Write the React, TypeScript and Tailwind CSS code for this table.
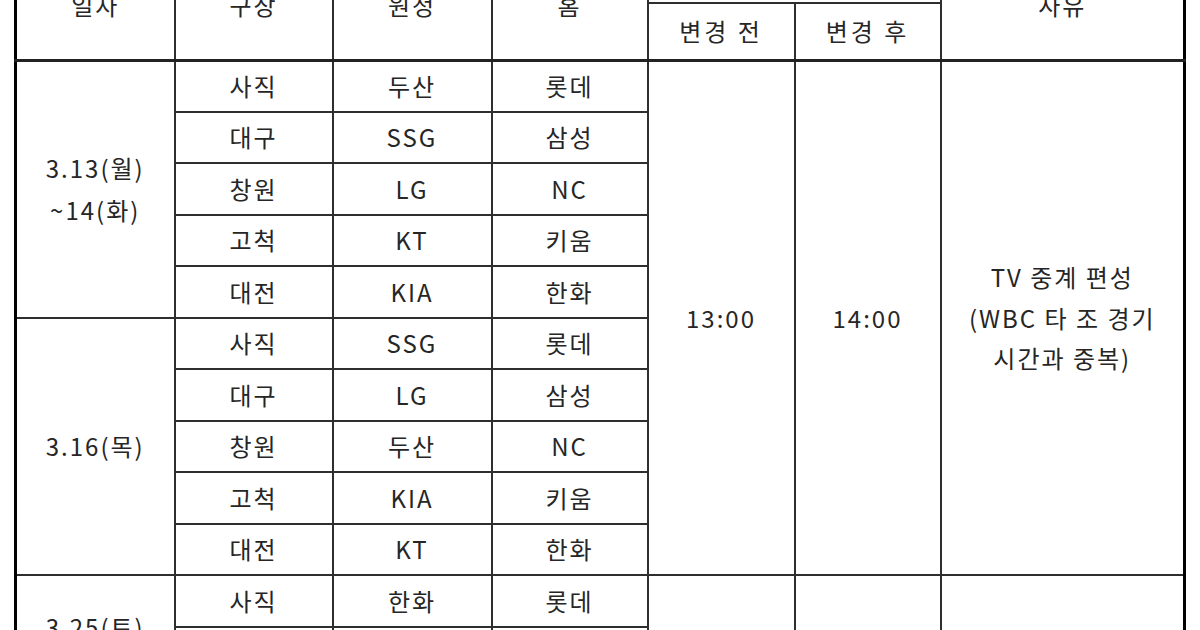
type Game = [string, string, string];

const groups: { date: string[]; games: Game[] }[] = [
  {
    date: ['3.13(월)', '~14(화)'],
    games: [
      ['사직', '두산', '롯데'],
      ['대구', 'SSG', '삼성'],
      ['창원', 'LG', 'NC'],
      ['고척', 'KT', '키움'],
      ['대전', 'KIA', '한화'],
    ],
  },
  {
    date: ['3.16(목)'],
    games: [
      ['사직', 'SSG', '롯데'],
      ['대구', 'LG', '삼성'],
      ['창원', '두산', 'NC'],
      ['고척', 'KIA', '키움'],
      ['대전', 'KT', '한화'],
    ],
  },
  {
    date: ['3.25(토)'],
    games: [
      ['사직', '한화', '롯데'],
      ['대구', 'KIA', '삼성'],
    ],
  },
];

const cell = 'border-2 border-[#2e2e2e] text-center align-middle p-0';
const first = 'border-l-[3px] border-l-black';
const last = 'border-r-[3px] border-r-black';

export default function App() {
  return (
    <div
      className="h-[630px] w-[1200px] overflow-hidden bg-white pl-[14px] text-[24px] tracking-[2px] text-[#262626]"
      style={{ fontFamily: '"Noto Sans CJK KR", "Noto Sans", sans-serif' }}
    >
      <table className="mt-[-50px] w-[1169px] table-fixed border-collapse">
        <colgroup>
          <col className="w-[159px]" />
          <col className="w-[158px]" />
          <col className="w-[159px]" />
          <col className="w-[156px]" />
          <col className="w-[147px]" />
          <col className="w-[146px]" />
          <col className="w-[244px]" />
        </colgroup>
        <thead>
          <tr className="h-[52px]">
            <th rowSpan={2} className={`${cell} ${first} border-b-[3px] border-b-[#222] font-normal`}>일자</th>
            <th rowSpan={2} className={`${cell} border-b-[3px] border-b-[#222] font-normal`}>구장</th>
            <th rowSpan={2} className={`${cell} border-b-[3px] border-b-[#222] font-normal`}>원정</th>
            <th rowSpan={2} className={`${cell} border-b-[3px] border-b-[#222] font-normal`}>홈</th>
            <th colSpan={2} className={`${cell} font-normal`}>경기 시간</th>
            <th rowSpan={2} className={`${cell} ${last} border-b-[3px] border-b-[#222] font-normal`}>사유</th>
          </tr>
          <tr className="h-[57px]">
            <th className={`${cell} border-b-[3px] border-b-[#222] font-normal tracking-[3px]`}>변경 전</th>
            <th className={`${cell} border-b-[3px] border-b-[#222] font-normal tracking-[3px]`}>변경 후</th>
          </tr>
        </thead>
        <tbody>
          {groups.map((g, gi) =>
            g.games.map((game, ri) => (
              <tr key={`${gi}-${ri}`} className="h-[51.5px]">
                {ri === 0 && (
                  <td rowSpan={5} className={`${cell} ${first}`}>
                    {g.date.map((d) => (
                      <div key={d} className="leading-[42px]">{d}</div>
                    ))}
                  </td>
                )}
                <td className={cell}>{game[0]}</td>
                <td className={cell}>{game[1]}</td>
                <td className={cell}>{game[2]}</td>
                {ri === 0 && gi === 0 && (
                  <>
                    <td rowSpan={10} className={cell}>13:00</td>
                    <td rowSpan={10} className={cell}>14:00</td>
                    <td rowSpan={10} className={`${cell} ${last}`}>
                      <div className="leading-[40.5px]">TV 중계 편성</div>
                      <div className="leading-[40.5px]">(WBC 타 조 경기</div>
                      <div className="leading-[40.5px]">시간과 중복)</div>
                    </td>
                  </>
                )}
                {ri === 0 && gi === 2 && (
                  <>
                    <td rowSpan={5} className={cell}></td>
                    <td rowSpan={5} className={cell}></td>
                    <td rowSpan={5} className={`${cell} ${last}`}></td>
                  </>
                )}
              </tr>
            ))
          )}
        </tbody>
      </table>
    </div>
  );
}
